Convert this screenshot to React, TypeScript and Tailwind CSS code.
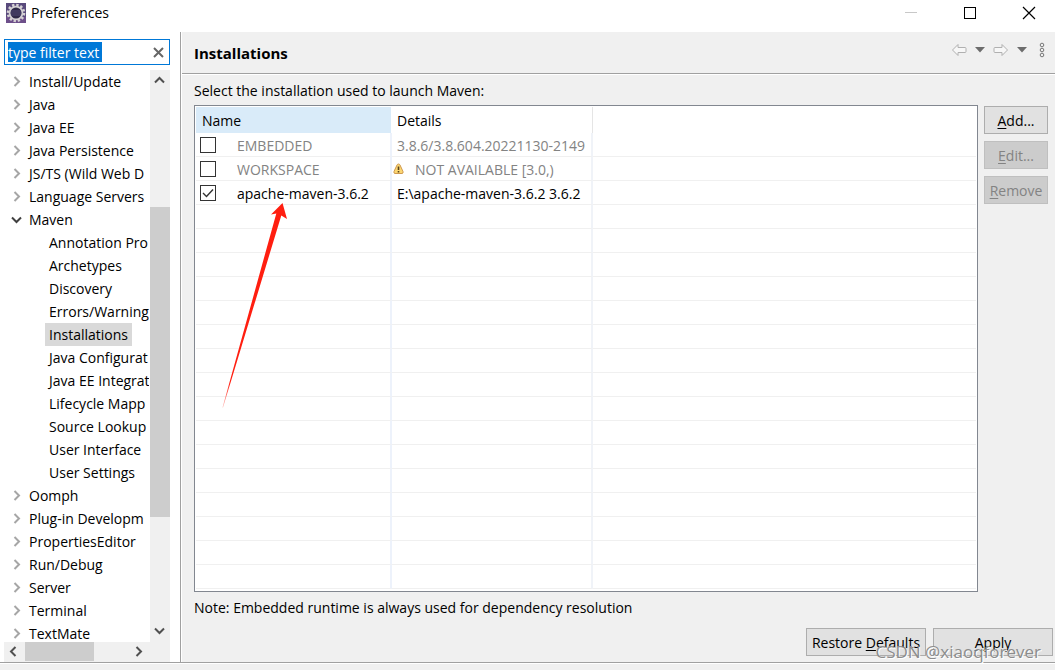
import React, { useState } from 'react';

interface TreeItem {
  name: string;
  level: number;
  open?: boolean;
}

interface Installation {
  name: string;
  details: string;
  checked: boolean;
  external: boolean;
  warning?: boolean;
}

const tree: TreeItem[] = [
  { name: 'Install/Update', level: 0 },
  { name: 'Java', level: 0 },
  { name: 'Java EE', level: 0 },
  { name: 'Java Persistence', level: 0 },
  { name: 'JS/TS (Wild Web D', level: 0 },
  { name: 'Language Servers', level: 0 },
  { name: 'Maven', level: 0, open: true },
  { name: 'Annotation Pro', level: 1 },
  { name: 'Archetypes', level: 1 },
  { name: 'Discovery', level: 1 },
  { name: 'Errors/Warnings', level: 1 },
  { name: 'Installations', level: 1 },
  { name: 'Java Configurat', level: 1 },
  { name: 'Java EE Integrat', level: 1 },
  { name: 'Lifecycle Mapp', level: 1 },
  { name: 'Source Lookup', level: 1 },
  { name: 'User Interface', level: 1 },
  { name: 'User Settings', level: 1 },
  { name: 'Oomph', level: 0 },
  { name: 'Plug-in Developm', level: 0 },
  { name: 'PropertiesEditor', level: 0 },
  { name: 'Run/Debug', level: 0 },
  { name: 'Server', level: 0 },
  { name: 'Terminal', level: 0 },
  { name: 'TextMate', level: 0 },
];

const initial: Installation[] = [
  { name: 'EMBEDDED', details: '3.8.6/3.8.604.20221130-2149', checked: false, external: false },
  { name: 'WORKSPACE', details: 'NOT AVAILABLE [3.0,)', checked: false, external: false, warning: true },
  { name: 'apache-maven-3.6.2', details: 'E:\\apache-maven-3.6.2 3.6.2', checked: true, external: true },
];

const EMPTY_ROWS = 16;

const chevrons = {
  up: 'M1 7.5 L5.5 3 L10 7.5',
  down: 'M1 3.5 L5.5 8 L10 3.5',
  left: 'M7.5 1 L3 5.5 L7.5 10',
  right: 'M3.5 1 L8 5.5 L3.5 10',
};

const Chevron: React.FC<{ dir: keyof typeof chevrons; color?: string }> = ({ dir, color = '#505050' }) => (
  <svg width="11" height="11" viewBox="0 0 11 11" fill="none" stroke={color} strokeWidth="2">
    <path d={chevrons[dir]} />
  </svg>
);

const EclipseLogo = () => (
  <svg width="20" height="20" viewBox="0 0 20 20">
    <rect width="20" height="20" fill="#594a7c" />
    <rect y="14" width="20" height="6" fill="#6d4f8a" />
    <circle cx="10" cy="10" r="7.800" fill="none" stroke="#d6d2d4" strokeWidth="3" strokeDasharray="2.3 1.784" />
    <circle cx="10" cy="10" r="6.400" fill="#2f2948" stroke="#d2cfd2" strokeWidth="1.8" />
    <path d="M5 8h10M4.500 10h11M5 12h10" stroke="#5c5484" strokeWidth="0.8" />
  </svg>
);

const WarningIcon = () => (
  <svg width="12" height="12" viewBox="0 0 12 12" className="shrink-0">
    <path d="M5.500 1 Q6.500 1 7 2 L10 8.500 Q10.500 10.500 9 10.500 H2 Q0.500 10.500 1 8.500 L4 2 Q4.500 1 5.500 1Z" fill="#fbd672" stroke="#d09a50" />
    <path d="M5.500 3.500V7M5.500 8V9.500" stroke="#54401c" strokeWidth="1.600" />
  </svg>
);

const TitleBar = () => (
  <header className="flex h-8 shrink-0 items-start bg-white">
    <div className="flex flex-1 items-center gap-[5px] pt-[3px] pl-1.5">
      <EclipseLogo />
      <h1 className="leading-5">Preferences</h1>
    </div>
    <div className="flex h-[26px] items-center gap-[45px] pr-[19px]">
      <button aria-label="Minimize">
        <svg width="14" height="14" viewBox="0 0 14 14">
          <path d="M1 6.500H13" stroke="#c8c8c8" />
        </svg>
      </button>
      <button aria-label="Maximize">
        <svg width="14" height="14" viewBox="0 0 14 14" fill="none">
          <rect x="1.500" y="1.500" width="11" height="11" stroke="#000" />
        </svg>
      </button>
      <button aria-label="Close">
        <svg width="14" height="14" viewBox="0 0 14 14">
          <path d="M1 1L13 13M13 1L1 13" stroke="#000" strokeWidth="1.200" />
        </svg>
      </button>
    </div>
  </header>
);

const Sidebar = () => {
  const [selected, setSelected] = useState('Installations');

  return (
    <aside className="flex w-[181px] shrink-0 flex-col border-r border-[#a0a0a0] bg-white pt-[7px] pr-2.5 pl-1">
      <div className="flex h-[26px] shrink-0 items-center border border-[#0078d7] pr-[5px] pl-[3px]">
        <div className="flex flex-1">
          <input
            aria-label="Filter preferences"
            defaultValue="type filter text"
            className="h-5 w-[94px] bg-[#0078d7] pt-0.5 text-white outline-none"
          />
        </div>
        <button aria-label="Clear filter">
          <svg width="11" height="11" viewBox="0 0 11 11">
            <path d="M1 1L10 10M10 1L1 10" stroke="#666" strokeWidth="2" />
          </svg>
        </button>
      </div>
      <div className="mt-[5px] flex min-h-0 flex-1">
        <ul className="mr-px min-w-0 flex-1 overflow-hidden">
          {tree.map((item) => (
            <li key={item.name} className={`flex h-[23px] items-center ${item.level ? 'pl-[41px]' : 'pl-[7px]'}`}>
              {item.level === 0 && (
                <span className="flex w-[14px] shrink-0">
                  <Chevron dir={item.open ? 'down' : 'right'} color={item.open ? '#404040' : '#a6a6a6'} />
                </span>
              )}
              <button
                onClick={() => setSelected(item.name)}
                className={`h-[23px] px-1 leading-[22px] whitespace-nowrap ${selected === item.name ? 'bg-[#d9d9d9]' : ''}`}
              >
                {item.name}
              </button>
            </li>
          ))}
        </ul>
        <div className="flex w-5 shrink-0 flex-col bg-[#f0f0f0]">
          <button aria-label="Scroll up" className="flex h-5 items-center justify-center pr-px">
            <Chevron dir="up" />
          </button>
          <div className="flex flex-1 flex-col">
            <div className="grow-[117]" />
            <div className="grow-[310] bg-[#cdcdcd]" />
            <div className="grow-[105]" />
          </div>
          <button aria-label="Scroll down" className="flex h-5 items-center justify-center pr-px pb-1">
            <Chevron dir="down" />
          </button>
        </div>
      </div>
      <div className="flex h-5 shrink-0 bg-[#f0f0f0] pr-[21px] pb-px">
        <button aria-label="Scroll left" className="flex w-[21px] items-center justify-center pr-0.5">
          <Chevron dir="left" />
        </button>
        <div className="flex flex-1">
          <div className="w-[69px] bg-[#cdcdcd]" />
        </div>
        <button aria-label="Scroll right" className="flex w-[21px] items-center justify-center">
          <Chevron dir="right" />
        </button>
      </div>
    </aside>
  );
};

const NavArrow: React.FC<{ flip?: boolean }> = ({ flip }) => (
  <svg width="16" height="14" viewBox="0 0 16 14">
    <path
      d={
        flip
          ? 'M14.500 7L9 1.500V4.500H2Q1 4.500 1 5.500V8.500Q1 9.500 2 9.500H9V12.500Z'
          : 'M1.500 7L7 1.500V4.500H14Q15 4.500 15 5.500V8.500Q15 9.500 14 9.500H7V12.500Z'
      }
      fill="#f7f7f7"
      stroke="#b0b0b0"
    />
  </svg>
);

const Caret = () => (
  <svg width="10" height="6" viewBox="0 0 10 6">
    <path d="M0 0H10L5 5.500Z" fill="#6c6c6c" />
  </svg>
);

const PageHeader = () => (
  <div className="flex h-[42px] shrink-0 items-center justify-between border-b border-[#a0a0a0] pr-2.5 pl-3">
    <h2 className="pt-0.5 text-[15px] font-bold">Installations</h2>
    <div className="flex items-center pb-1.5">
      <button aria-label="Back"><NavArrow /></button>
      <button aria-label="Back history" className="ml-2"><Caret /></button>
      <button aria-label="Forward" className="ml-2"><NavArrow flip /></button>
      <button aria-label="Forward history" className="ml-2"><Caret /></button>
      <button aria-label="View menu" className="ml-3">
        <svg width="6" height="16" viewBox="0 0 6 16" fill="none" stroke="#777">
          <circle cx="3" cy="3" r="1.800" />
          <circle cx="3" cy="8" r="1.800" />
          <circle cx="3" cy="13" r="1.800" />
        </svg>
      </button>
    </div>
  </div>
);

interface PushProps {
  hotkey: string;
  before?: string;
  after: string;
  disabled?: boolean;
  wide?: boolean;
}

const PushButton: React.FC<PushProps> = ({ hotkey, before, after, disabled, wide }) => (
  <button
    disabled={disabled}
    className={`h-7 border pt-0.5 leading-6 whitespace-nowrap ${wide ? 'w-[120px]' : 'w-16'} ${
      disabled ? 'border-[#bfbfbf] bg-[#cccccc] text-[#838383]' : 'border-[#adadad] bg-[#e1e1e1]'
    }`}
  >
    {before}
    <span className="underline underline-offset-2">{hotkey}</span>
    {after}
  </button>
);

const InstallationsTable = () => {
  const [rows, setRows] = useState(initial);

  const check = (name: string) => setRows(rows.map((r) => ({ ...r, checked: r.name === name })));

  return (
    <div className="relative min-w-0 flex-1 overflow-hidden border border-[#828790] bg-white p-px">
      <table className="w-full table-fixed border-separate border-spacing-0">
        <colgroup>
          <col className="w-[196px]" />
          <col className="w-[201px]" />
          <col />
        </colgroup>
        <thead>
          <tr className="h-[26px] text-left">
            <th className="border-r border-white bg-[#d9ebf9] p-0 pt-0.5 pl-1.5 font-normal">Name</th>
            <th className="border-r border-[#e5e5e5] p-0 pt-0.5 pl-[5px] font-normal">Details</th>
            <th className="p-0" />
          </tr>
        </thead>
        <tbody>
          {rows.map((row) => (
            <tr key={row.name} className={`h-6 ${row.external ? '' : 'text-[#838383]'}`}>
              <td className="border-r-2 border-b border-r-[#edf2fb] border-b-[#f0f0f0] p-0 pl-1">
                <label className="flex h-[23px] items-center">
                  <span className="relative flex h-4 w-4 shrink-0">
                    <input
                      type="checkbox"
                      checked={row.checked}
                      onChange={() => check(row.name)}
                      className="h-4 w-4 appearance-none border border-[#333] bg-white"
                    />
                    {row.checked && (
                      <svg width="16" height="16" viewBox="0 0 16 16" className="pointer-events-none absolute inset-0">
                        <path d="M3 8L6.500 11.500L13 4.500" fill="none" stroke="#333" strokeWidth="1.400" />
                      </svg>
                    )}
                  </span>
                  <span className="pt-0.5 pl-[21px] whitespace-nowrap">{row.name}</span>
                </label>
              </td>
              <td className="border-r-2 border-b border-r-[#f0f3f8] border-b-[#f0f0f0] p-0">
                <div className="flex h-[23px] items-center whitespace-nowrap">
                  {row.warning && <span className="pl-px"><WarningIcon /></span>}
                  <span className={`pt-0.5 ${row.warning ? 'pl-2.5' : 'pl-[5px]'}`}>{row.details}</span>
                </div>
              </td>
              <td className="border-b border-[#f0f0f0] p-0" />
            </tr>
          ))}
          {Array.from({ length: EMPTY_ROWS }, (_, i) => (
            <tr key={i} className="h-6">
              <td className="border-r-2 border-b border-r-[#edf2fb] border-b-[#f0f0f0] p-0" />
              <td className="border-r-2 border-b border-r-[#f0f3f8] border-b-[#f0f0f0] p-0" />
              <td className="border-b border-[#f0f0f0] p-0" />
            </tr>
          ))}
        </tbody>
      </table>
      <svg width="70" height="210" viewBox="0 0 70 210" className="pointer-events-none absolute top-24 left-6">
        <defs>
          <linearGradient id="tail" x1="0" y1="1" x2="0" y2="0">
            <stop offset="0" stopColor="#ff1e10" stopOpacity="0.3" />
            <stop offset="0.12" stopColor="#ff1e10" />
          </linearGradient>
        </defs>
        <path d="M63.500 1L52 12.500L57.300 11.500L3.500 205.500L4 205.500L62.300 13.500L68 17Z" fill="url(#tail)" />
      </svg>
    </div>
  );
};

export default function App() {
  return (
    <div className="flex h-screen flex-col overflow-hidden bg-[#f0f0f0] font-['Open_Sans','Noto_Sans',sans-serif] text-sm text-black">
      <TitleBar />
      <div className="flex min-h-0 flex-1">
        <Sidebar />
        <main className="relative flex min-w-0 flex-1 flex-col border-l border-white">
          <PageHeader />
          <div className="flex min-h-0 flex-1 flex-col border-t border-white pt-1 pl-3">
            <p className="leading-6">Select the installation used to launch Maven:</p>
            <div className="mt-0.5 flex min-h-0 flex-1 gap-1.5 pr-[7px]">
              <InstallationsTable />
              <div className="flex flex-col gap-[7px] pt-px">
                <PushButton hotkey="A" after="dd..." />
                <PushButton hotkey="E" after="dit..." disabled />
                <PushButton hotkey="R" after="emove" disabled />
              </div>
            </div>
            <p className="mt-1 leading-6">Note: Embedded runtime is always used for dependency resolution</p>
            <div className="mt-2 mb-1.5 flex justify-end gap-[7px] pr-0.5">
              <PushButton before="Restore " hotkey="D" after="efaults" wide />
              <PushButton hotkey="A" after="pply" wide />
            </div>
          </div>
          <span className="pointer-events-none absolute right-3.5 bottom-0 text-[17px] leading-5 text-[#8c8c8c] [text-shadow:1px_1px_0_#fff]">
            CSDN @xiaoqforever
          </span>
        </main>
      </div>
      <footer className="h-2 shrink-0 border-t border-[#a0a0a0]">
        <div className="h-px bg-white" />
      </footer>
    </div>
  );
}
